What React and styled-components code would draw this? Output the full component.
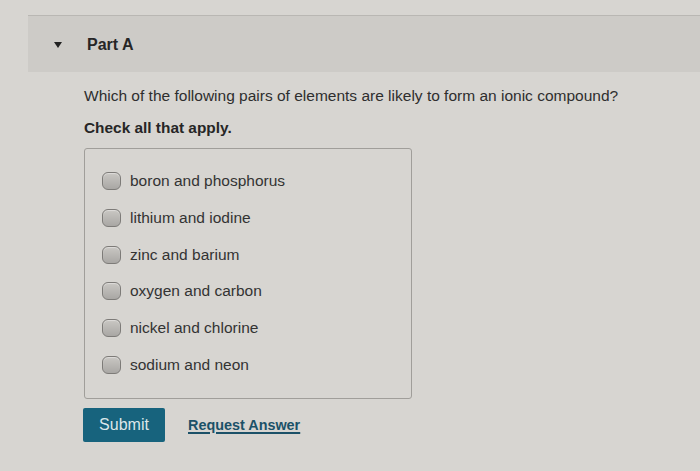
import React from 'react';
import styled, { createGlobalStyle } from 'styled-components';

const GlobalStyle = createGlobalStyle`
  html, body {
    margin: 0;
    padding: 0;
    background: #d7d5d1;
  }
  body {
    font-family: "Liberation Sans", Arial, sans-serif;
    color: #2b2b2b;
  }
`;

const Page = styled.div`
  width: 700px;
  height: 471px;
  overflow: hidden;
  padding-top: 15px;
  box-sizing: border-box;
`;

const PartHeader = styled.div`
  margin-left: 28px;
  height: 56px;
  border-top: 1px solid #b9b7b3;
  background: #cdcbc7;
  display: flex;
  align-items: center;
  padding-left: 26px;
  gap: 25px;
`;

const Caret = styled.span`
  width: 0;
  height: 0;
  border-left: 4px solid transparent;
  border-right: 4px solid transparent;
  border-top: 6px solid #222;
  margin-top: 2px;
`;

const PartTitle = styled.h2`
  margin: 0;
  font-size: 16px;
  font-weight: bold;
  color: #262626;
  padding-top: 2px;
`;

const Body = styled.div`
  padding: 14px 0 0 84px;
`;

const Question = styled.p`
  margin: 0;
  font-size: 15.5px;
  line-height: 19px;
  color: #2e2e2e;
`;

const Instruction = styled.p`
  margin: 13px 0 0;
  font-size: 15.4px;
  font-weight: bold;
  line-height: 19px;
  color: #262626;
`;

const OptionBox = styled.div`
  margin-top: 11px;
  width: 328px;
  height: 251px;
  box-sizing: border-box;
  border: 1px solid #a09e9a;
  border-radius: 3px;
  padding: 23px 0 0 17px;
  display: flex;
  flex-direction: column;
  gap: 18.8px;
`;

const Option = styled.label`
  display: flex;
  align-items: center;
  gap: 9px;
  height: 18px;
  font-size: 15.5px;
  color: #333;
`;

const Check = styled.span`
  width: 17px;
  height: 16px;
  border: 1px solid #7d7b78;
  border-radius: 6px;
  background: linear-gradient(#c9c7c3, #a9a7a4);
  box-shadow: inset 0 1px 1px rgba(255, 255, 255, 0.4);
`;

const Actions = styled.div`
  margin-top: 9px;
  margin-left: -1px;
  display: flex;
  align-items: center;
  gap: 23px;
`;

const SubmitButton = styled.button`
  width: 82px;
  height: 34px;
  border: none;
  border-radius: 2px;
  background: #17637d;
  color: #dce7ea;
  font-family: "Liberation Sans", Arial, sans-serif;
  font-size: 16px;
  padding: 0;
`;

const RequestLink = styled.a`
  font-size: 14.4px;
  font-weight: bold;
  color: #1b5168;
  text-decoration: underline;
  text-decoration-thickness: 2px;
  text-underline-offset: 2px;
`;

const options = [
  'boron and phosphorus',
  'lithium and iodine',
  'zinc and barium',
  'oxygen and carbon',
  'nickel and chlorine',
  'sodium and neon',
];

const App = () => (
  <Page>
    <GlobalStyle />
    <PartHeader>
      <Caret />
      <PartTitle>Part A</PartTitle>
    </PartHeader>
    <Body>
      <Question>Which of the following pairs of elements are likely to form an ionic compound?</Question>
      <Instruction>Check all that apply.</Instruction>
      <OptionBox>
        {options.map(o => (
          <Option key={o}>
            <Check />
            {o}
          </Option>
        ))}
      </OptionBox>
      <Actions>
        <SubmitButton>Submit</SubmitButton>
        <RequestLink>Request Answer</RequestLink>
      </Actions>
    </Body>
  </Page>
);

export default App;
